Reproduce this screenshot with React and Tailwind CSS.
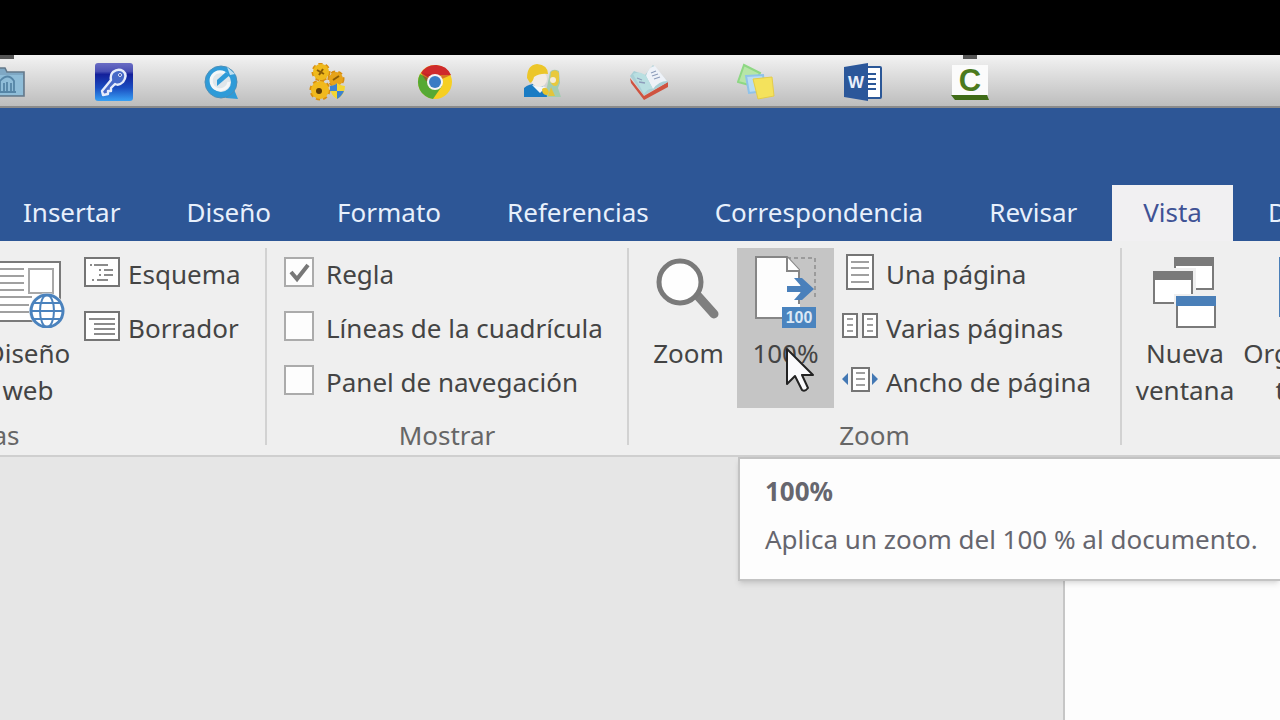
import { useState } from "react";
import clsx from "clsx";

const TABS = ["Insertar", "Diseño", "Formato", "Referencias", "Correspondencia", "Revisar", "Vista", "Desarrollador"];

/* ---------- Dock icons, all on a 38 x 38 grid ---------- */

function FolderIcon() {
  return (
    <svg viewBox="0 0 38 38" className="size-full">
      <path d="M2 8V5h15l2 4h17v24H2z" fill="#7fa8c4" stroke="#64798b" strokeWidth="1.6" />
      <path d="M3 12h32v20H3z" fill="#8fbdd8" />
      <path d="M12 29V18q8-9 14 0v11M16 29V20M19 29V19M23 29V20M10 29h18" fill="none" stroke="#5685a6" strokeWidth="1.8" />
    </svg>
  );
}

function KeyIcon() {
  return (
    <svg viewBox="0 0 38 38" className="size-full">
      <defs>
        <linearGradient id="key" x1="0" y1="0" x2="0" y2="1">
          <stop offset="0" stopColor="#6a6cc4" />
          <stop offset=".22" stopColor="#4a50b4" />
          <stop offset=".3" stopColor="#14209a" />
          <stop offset=".65" stopColor="#1a4cc0" />
          <stop offset="1" stopColor="#38a0f4" />
        </linearGradient>
      </defs>
      <rect x="0" y="0" width="38" height="38" rx="3" fill="url(#key)" />
      <path d="M18 9q5-4 10-1q5 4 0 11q-4 4-8 2l-4 4v3h-3v3l-5 1l-1-4l9-11q-1-5 2-8z" fill="#4668c8" stroke="#e6ecfb" strokeWidth="2.4" strokeLinejoin="round" />
      <circle cx="25" cy="12" r="1.5" fill="#1c2fa0" stroke="#e6ecfb" strokeWidth="1" />
    </svg>
  );
}

function QuickTimeIcon() {
  return (
    <svg viewBox="0 0 38 38" className="size-full">
      <path d="M22 28l9-4l5 12l-12-1z" fill="#2f9bd8" />
      <circle cx="19" cy="19" r="13" fill="#dfe6ea" stroke="#2f9bd8" strokeWidth="6" />
      <circle cx="19" cy="19" r="16" fill="none" stroke="#4d8fb8" strokeWidth="1" />
      <path d="M25 12a9 9 0 1 0 2 7" fill="none" stroke="#f4f7f8" strokeWidth="3" />
      <path d="M15 23v-6L24 9l4 3z" fill="#2f9bd8" />
      <path d="M25 4l8 7l-5 1z" fill="#bfe0f1" />
    </svg>
  );
}

function GearsIcon() {
  return (
    <svg viewBox="0 0 38 38" className="size-full">
      <g fill="none" stroke="#d98e10" strokeWidth="3" strokeDasharray="4 3">
        <circle cx="12" cy="9" r="8" />
        <circle cx="11" cy="27" r="9" />
        <circle cx="27" cy="16" r="7" />
      </g>
      <circle cx="12" cy="9" r="8" fill="#efb91c" />
      <circle cx="27" cy="16" r="7" fill="#e7a319" />
      <circle cx="11" cy="27" r="9" fill="#f1b91d" />
      <path d="M8 7l7 4M14 6l-4 6M24 17l6-4" stroke="#8a5c06" strokeWidth="2" />
      <circle cx="10" cy="28" r="3" fill="#5d3c06" />
      <path d="M21 23q6-1 7-3q2 2 8 3q0 9-8 13q-7-4-7-13z" fill="#f3d533" />
      <path d="M21 23q6-1 7-3v8h-7zM28 28h7q-2 5-7 8z" fill="#3d82d0" />
    </svg>
  );
}

function ChromeIcon() {
  return (
    <svg viewBox="0 0 38 38" className="size-full">
      <circle cx="19" cy="19" r="17" fill="#f6cf22" />
      <path d="M19 19L4 11A17 17 0 0 0 17 36l9-13z" fill="#55a934" />
      <path d="M19 19L5 10A17 17 0 0 1 35 12H19z" fill="#cf2a2b" />
      <path d="M19 12h16l-16 7L10 18L5 10z" fill="#b81f22" opacity=".5" />
      <circle cx="19" cy="19" r="8" fill="#f4f4f4" />
      <circle cx="19" cy="19" r="6" fill="#3a7bc4" />
    </svg>
  );
}

function UsersIcon() {
  return (
    <svg viewBox="0 0 38 38" className="size-full">
      <path d="M27 9q3-4 9-1l1 12l-2 5l3 9H22z" fill="#a3ccb0" />
      <path d="M28 9q5-4 8 1v8q-1 5-4 5t-5-5z" fill="#e8c93c" />
      <circle cx="30" cy="17" r="3" fill="#f4ecd8" />
      <path d="M1 34V25q6-5 16-4q6 4 7 13z" fill="#1a7cc4" />
      <path d="M9 22l8 8l6-6z" fill="#f3f6f8" />
      <circle cx="16" cy="16" r="8" fill="#f2ebe4" />
      <path d="M4 15q0-13 10-14q11 1 11 10q-8-1-14 3q-1 5-4 6z" fill="#ecc629" />
      <path d="M19 26q4-3 6 1q2 3-1 5q-5 0-5-6z" fill="#e8c52e" />
      <path d="M25 33l3-9l4 9z" fill="#e3c43a" />
    </svg>
  );
}

function BookIcon() {
  return (
    <svg viewBox="0 0 38 38" className="size-full">
      <path d="M0 15l14 18l24-14v5L14 37L1 20z" fill="#cf5340" />
      <path d="M0 13l4-5l11 4l8-10l15 17l-24 13z" fill="#a9d0d6" />
      <path d="M16 13Q19 3 25 3l12 15q-8 0-14 8z" fill="#eef2f8" />
      <path d="M3 11q7-4 13 2l7 13q-5-1-9 5z" fill="#b9dfe1" />
      <path d="M21 10l5-2M22 13l6-2M24 16l6-2M7 15l5 2M9 19l6 1" stroke="#8d9dbb" strokeWidth="1.300" />
    </svg>
  );
}

function NotesIcon() {
  return (
    <svg viewBox="0 0 38 38" className="size-full">
      <path d="M7 2l16 8l-7 13L1 19z" fill="#b7e6a8" stroke="#8ed884" strokeWidth="2" />
      <path d="M9 13l17-1l2 16l-16 2z" fill="#b8dcf4" stroke="#8fc3ea" strokeWidth="2" />
      <path d="M16 16l19-2l2 19l-16 3z" fill="#f4e25c" stroke="#e4cc4a" strokeWidth="1" />
    </svg>
  );
}

function WordIcon() {
  return (
    <svg viewBox="0 0 38 38" className="size-full">
      <rect x="18" y="4" width="19" height="31" rx="1" fill="#fff" stroke="#2b5797" strokeWidth="2" />
      <path d="M22 11h10M22 16h10M22 21h10M22 26h10" stroke="#2b5797" strokeWidth="2" />
      <path d="M0 4L24 0v38L0 34z" fill="#2b579a" />
      <text x="12" y="25" textAnchor="middle" fontFamily="Liberation Sans" fontWeight="700" fontSize="17" fill="#e9effa">
        W
      </text>
    </svg>
  );
}

function CamtasiaIcon() {
  return (
    <svg viewBox="0 0 38 38" className="size-full">
      <rect x="1" y="2" width="36" height="30" fill="#fbfbfb" />
      <path d="M0 32h36l2 5H4z" fill="#3f6b16" />
      <text x="19" y="28" textAnchor="middle" fontFamily="Liberation Sans" fontWeight="700" fontSize="31" fill="#4c7a1e">
        C
      </text>
    </svg>
  );
}

const DOCK = [
  { name: "Biblioteca", Icon: FolderIcon, running: true },
  { name: "Llavero", Icon: KeyIcon },
  { name: "QuickTime", Icon: QuickTimeIcon },
  { name: "Servicios", Icon: GearsIcon },
  { name: "Chrome", Icon: ChromeIcon },
  { name: "Usuarios", Icon: UsersIcon },
  { name: "Diccionario", Icon: BookIcon },
  { name: "Notas", Icon: NotesIcon },
  { name: "Word", Icon: WordIcon },
  { name: "Camtasia", Icon: CamtasiaIcon, running: true },
];

/* ---------- Ribbon icons ---------- */

function WebLayoutIcon() {
  return (
    <svg width="76" height="76" viewBox="0 0 76 76" fill="none">
      <rect x="3" y="10" width="67" height="59" fill="#fff" stroke="#7a7a7a" strokeWidth="2" />
      <path d="M8 17h26M8 24h26M8 31h26M8 38h26M8 45h34M8 53h31M8 60h31" stroke="#a0a0a0" strokeWidth="2" />
      <rect x="39" y="17" width="24" height="24" fill="#fff" stroke="#a8a8a8" strokeWidth="2" />
      <circle cx="57" cy="59" r="18" fill="#efefef" />
      <circle cx="57" cy="59" r="16" fill="#fff" stroke="#4a82bd" strokeWidth="3" />
      <ellipse cx="57" cy="59" rx="7" ry="16" stroke="#4a82bd" strokeWidth="2" />
      <path d="M41 59h32M44 51h26M44 67h26" stroke="#4a82bd" strokeWidth="2" />
    </svg>
  );
}

function OutlineIcon() {
  return (
    <svg width="36" height="30" viewBox="0 0 36 30">
      <rect x="1" y="1" width="34" height="28" fill="#fff" stroke="#757575" strokeWidth="2" />
      <path d="M6 8h2M10 8h14M15 13h2M20 13h9M15 18h2M20 18h9M8 23h2M13 23h11" stroke="#8b8b8b" strokeWidth="2" />
    </svg>
  );
}

function DraftIcon() {
  return (
    <svg width="36" height="30" viewBox="0 0 36 30">
      <rect x="1" y="1" width="34" height="28" fill="#fff" stroke="#757575" strokeWidth="2" />
      <path d="M5 8h26M10 13h21M10 18h21M10 23h21" stroke="#8b8b8b" strokeWidth="2" />
    </svg>
  );
}

function MagnifierIcon() {
  return (
    <svg width="70" height="72" viewBox="0 0 70 72">
      <path d="M43 43L60 62" stroke="#7f7f7f" strokeWidth="9" strokeLinecap="round" />
      <circle cx="26" cy="30" r="21" fill="#fefefe" stroke="#7a7a7a" strokeWidth="5" />
    </svg>
  );
}

function HundredIcon() {
  return (
    <svg width="62" height="72" viewBox="0 0 62 72">
      <path d="M32 6h28v42" fill="none" stroke="#9b9b9b" strokeWidth="2" strokeDasharray="4 3" />
      <path d="M1 5h31l13 14v47H1z" fill="#fdfdfd" />
      <path d="M27 66H1V5h31l12 13v8M44 44v8" fill="none" stroke="#868686" strokeWidth="2" />
      <path d="M32 5v14h13" fill="#fff" stroke="#868686" strokeWidth="2" />
      <path d="M32 34h14l-7-8h8l12 11l-12 11h-8l7-8H32z" fill="#4a80bb" />
      <rect x="27" y="55" width="34" height="22" fill="#4a84bf" />
    </svg>
  );
}

function OnePageIcon() {
  return (
    <svg width="36" height="38" viewBox="0 0 36 38">
      <rect x="5" y="2" width="26" height="34" fill="#fff" stroke="#757575" strokeWidth="2" />
      <path d="M9 9h18M9 15h18M9 22h18M9 29h18" stroke="#a0a0a0" strokeWidth="2" />
    </svg>
  );
}

function TwoPagesIcon() {
  return (
    <svg width="36" height="38" viewBox="0 0 36 38" fill="#fff">
      <rect x="1" y="7" width="14" height="23" stroke="#757575" strokeWidth="2" />
      <rect x="21" y="7" width="14" height="23" stroke="#757575" strokeWidth="2" />
      <path d="M5 12h6M5 18h6M5 24h6M25 12h6M25 18h6M25 24h6" stroke="#a0a0a0" strokeWidth="2" />
    </svg>
  );
}

function PageWidthIcon() {
  return (
    <svg width="36" height="38" viewBox="0 0 36 38">
      <rect x="10" y="7" width="17" height="23" fill="#fff" stroke="#757575" strokeWidth="2" />
      <path d="M14 12h9M14 18h9M14 24h9" stroke="#a0a0a0" strokeWidth="2" />
      <path d="M0 18l6-6v12zM36 18l-6-6v12z" fill="#4378b4" />
    </svg>
  );
}

function NewWindowIcon() {
  return (
    <svg width="64" height="76" viewBox="0 0 64 76">
      <rect x="22" y="6" width="38" height="31" fill="#fff" stroke="#7a7a7a" strokeWidth="2" />
      <path d="M21 5h40v9H21z" fill="#7a7a7a" />
      <path d="M-1 16h44v37H-1z" fill="#efefef" />
      <rect x="1" y="20" width="38" height="31" fill="#fff" stroke="#7a7a7a" strokeWidth="2" />
      <path d="M0 19h40v9H0z" fill="#7a7a7a" />
      <path d="M21 42h43v36H21z" fill="#efefef" />
      <rect x="24" y="46" width="38" height="29" fill="#fff" stroke="#7a7a7a" strokeWidth="2" />
      <path d="M23 44h40v10H23z" fill="#4a7fb8" />
    </svg>
  );
}

function ArrangeIcon() {
  return (
    <svg width="50" height="72" viewBox="0 0 50 72">
      <rect x="1" y="6" width="48" height="28" fill="#fff" stroke="#4a7fb8" strokeWidth="2" />
      <path d="M0 5h50v9H0z" fill="#4a7fb8" />
      <rect x="1" y="36" width="48" height="28" fill="#fff" stroke="#4a7fb8" strokeWidth="2" />
      <path d="M0 35h50v9H0z" fill="#4a7fb8" />
    </svg>
  );
}

/* ---------- Ribbon parts ---------- */

function RibbonGroup({ title, className, children }) {
  return (
    <section className={clsx("flex shrink-0 flex-col", className)}>
      <div className="flex h-[177px]">{children}</div>
      <h2 className="text-center leading-5 text-[#666]">{title}</h2>
    </section>
  );
}

function BigButton({ icon, label, className, children }) {
  return (
    <button
      type="button"
      className={clsx("relative flex h-40 shrink-0 flex-col items-center pt-1 leading-[37px] text-[#444]", className)}
    >
      <span className="flex h-[83px] shrink-0 items-start">{icon}</span>
      <span>{label}</span>
      {children}
    </button>
  );
}

function SmallButton({ icon, label }) {
  return (
    <button type="button" className="flex h-[30px] items-center gap-2 whitespace-nowrap text-[#444]">
      {icon}
      <span className="pt-1">{label}</span>
    </button>
  );
}

function CheckOption({ label, defaultChecked }) {
  return (
    <label className="flex h-[30px] items-center gap-3 whitespace-nowrap text-[#444]">
      <span className="relative size-[30px]">
        <input
          type="checkbox"
          defaultChecked={defaultChecked}
          className="peer block size-[30px] appearance-none border-2 border-[#ababab] bg-[#fdfdfd]"
        />
        <svg viewBox="0 0 30 30" className="pointer-events-none absolute inset-0 hidden peer-checked:block">
          <path d="M7 15l6 7L24 8" fill="none" stroke="#777" strokeWidth="4" />
        </svg>
      </span>
      <span className="pt-1">{label}</span>
    </label>
  );
}

export default function App() {
  const [tab, setTab] = useState("Vista");

  return (
    <div className="flex min-h-screen flex-col overflow-hidden bg-[#e6e6e6] font-['Noto_Sans',sans-serif] text-[26px]">
      <div className="h-[55px] bg-black" />

      {/* Dock */}
      <nav className="flex h-[53px] gap-[69px] border-b-2 border-[#8a8a8a] bg-linear-to-b from-[#f3f3f3] to-[#bdbdbd] pt-2">
        {DOCK.map(({ name, Icon, running }) => (
          <button key={name} type="button" aria-label={name} className="relative size-[38px] shrink-0 first:-ml-3">
            <Icon />
            {running && <span className="absolute -top-2 left-3 h-1 w-[14px] bg-[#555]" />}
          </button>
        ))}
      </nav>

      {/* Tabs */}
      <header className="bg-[#2d5696] pt-[77px]">
        <div role="tablist" className="-ml-2 flex gap-1">
          {TABS.map((name) => (
            <button
              key={name}
              type="button"
              role="tab"
              aria-selected={tab === name}
              onClick={() => setTab(name)}
              className={clsx(
                "h-14 shrink-0 px-[31px] pb-0.5",
                tab === name ? "bg-[#f1f0f2] text-[#3f5295]" : "text-[#e8f0fc]"
              )}
            >
              {name}
            </button>
          ))}
        </div>
      </header>

      {/* Ribbon, scrolled to the right of the first group */}
      <main className="flex flex-1 flex-col">
        <div className="-ml-[297px] flex border-b-2 border-[#cfcfcf] bg-[#efefef] pt-[7px] pb-[10px]">
          <RibbonGroup title="Vistas" className="w-[564px] border-r-2 border-[#d2d2d2]">
            <BigButton
              className="ml-[277px] w-24"
              icon={<WebLayoutIcon />}
              label={<>Diseño<br />web</>}
            />
            <div className="ml-2 flex flex-col gap-6 pt-[9px]">
              <SmallButton icon={<OutlineIcon />} label="Esquema" />
              <SmallButton icon={<DraftIcon />} label="Borrador" />
            </div>
          </RibbonGroup>

          <RibbonGroup title="Mostrar" className="w-[362px] border-r-2 border-[#d2d2d2]">
            <div className="ml-[17px] flex flex-col gap-6 pt-[9px]">
              <CheckOption label="Regla" defaultChecked />
              <CheckOption label="Líneas de la cuadrícula" />
              <CheckOption label="Panel de navegación" />
            </div>
          </RibbonGroup>

          <RibbonGroup title="Zoom" className="w-[493px] border-r-2 border-[#d2d2d2]">
            <BigButton className="ml-[11px] w-[97px]" icon={<MagnifierIcon />} label="Zoom" />
            <BigButton className="w-[97px] bg-[#c5c5c5]" icon={<HundredIcon />} label="100%">
              <span className="absolute top-[60px] left-[45px] w-[34px] bg-[#4a84bf] text-center font-['Liberation_Sans'] text-[16px] leading-5 font-bold text-[#dbe8f5]">
                100
              </span>
              <svg width="30" height="46" viewBox="0 0 30 46" className="absolute top-[99px] left-12">
                <path d="M2 2v35l8-8l7 14q3 2 6-2l-6-13h11z" fill="#fafafc" stroke="#222" strokeWidth="2" strokeLinejoin="round" />
              </svg>
            </BigButton>
            <div className="ml-2 flex flex-col gap-6 pt-[9px]">
              <SmallButton icon={<OnePageIcon />} label="Una página" />
              <SmallButton icon={<TwoPagesIcon />} label="Varias páginas" />
              <SmallButton icon={<PageWidthIcon />} label="Ancho de página" />
            </div>
          </RibbonGroup>

          <RibbonGroup title="Ventana" className="w-[700px]">
            <BigButton className="ml-[11px] w-26" icon={<NewWindowIcon />} label={<>Nueva<br />ventana</>} />
            <BigButton className="w-[134px]" icon={<ArrangeIcon />} label={<>Organizar<br />todo</>} />
          </RibbonGroup>
        </div>

        {/* Document */}
        <div className="relative flex flex-1 justify-end">
          <div className="w-[217px] border-l-2 border-[#c6c6c6] bg-[#fdfdfd]" />
          <div
            role="tooltip"
            className="absolute top-0 right-0 left-[738px] border-2 border-r-0 border-[#c3c3c3] bg-[#fdfdfd] px-[25px] pt-[14px] pb-[22px] whitespace-nowrap text-[#66666e] shadow-md"
          >
            <p className="leading-9 font-bold">100%</p>
            <p className="pt-3 leading-9">Aplica un zoom del 100 % al documento.</p>
          </div>
        </div>
      </main>
    </div>
  );
}
